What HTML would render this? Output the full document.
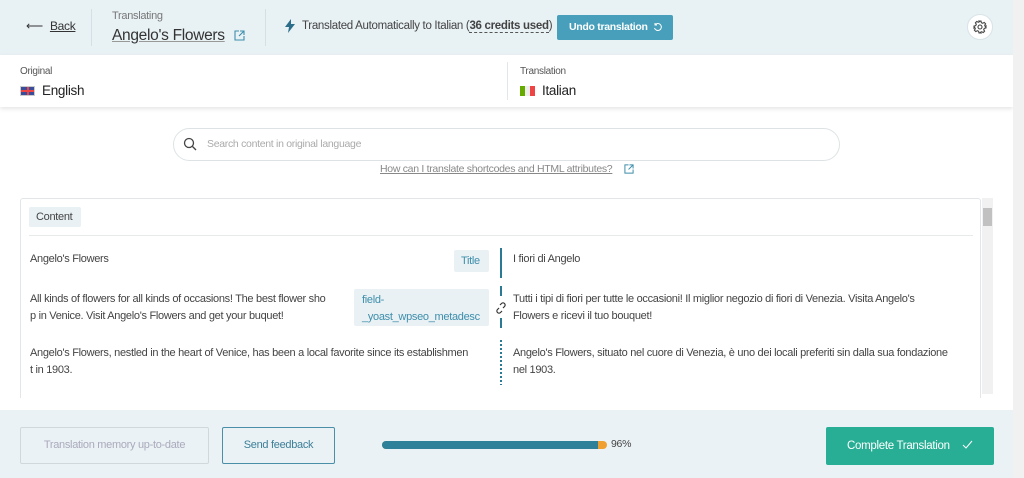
<!DOCTYPE html>
<html><head><meta charset="utf-8"><style>
*{box-sizing:border-box;margin:0;padding:0}
body{width:1024px;height:478px;overflow:hidden;background:#fff;font-family:"Liberation Sans",sans-serif;color:#333;position:relative;letter-spacing:-0.3px}
.a{position:absolute;white-space:nowrap}
.t{font-size:11px;color:#444}
</style></head><body>
<div class="a" style="left:0;top:0;width:1013px;height:55px;background:#e8f1f4"></div>
<div class="a" style="left:26px;top:19px;font-size:12px;color:#333">⟵ <span style="text-decoration:underline;margin-left:4px">Back</span></div>
<div class="a" style="left:91px;top:9px;width:1px;height:37px;background:#d5e0e4"></div>
<div class="a" style="left:112px;top:10px;font-size:11px;color:#777">Translating</div>
<div class="a" style="left:112px;top:27px;font-size:15.5px;color:#333;text-decoration:underline;text-decoration-color:#999">Angelo's Flowers</div>
<svg class="a" style="left:234px;top:30px" width="11" height="11" viewBox="0 0 11 11" fill="none" stroke="#3d8eab" stroke-width="1.1"><path d="M5 1H1v9h9V6M6 1h4v4M10 1L5 6"/></svg>
<div class="a" style="left:265px;top:9px;width:1px;height:37px;background:#d5e0e4"></div>
<svg class="a" style="left:285px;top:19px" width="10" height="14" viewBox="0 0 10 14"><path d="M6 0L0 8h4l-1 6 7-9H6z" fill="#2b6e8a"/></svg>
<div class="a" style="left:302px;top:20px;font-size:11.5px;color:#444">Translated Automatically to Italian (<b style="font-weight:bold;border-bottom:1px dashed #555">36 credits used</b>)</div>
<div class="a" style="left:557px;top:15px;width:116px;height:25px;background:#479fbb;border-radius:2px;color:#fff;font-size:10.5px;font-weight:bold;padding:6px 0 0 12px">Undo translation</div>
<svg class="a" style="left:653px;top:22px" width="10" height="10" viewBox="0 0 10 10" fill="none" stroke="#fff" stroke-width="1"><path d="M2 3A3.5 3.5 0 1 1 1.5 6M2 1v2h2"/></svg>
<div class="a" style="left:967px;top:14px;width:26px;height:26px;border-radius:50%;background:#fff;border:1px solid #d8e4e8"></div>
<svg class="a" style="left:973px;top:20px" width="14" height="14" viewBox="0 0 14 14" fill="none" stroke="#444" stroke-width="1.1"><circle cx="7" cy="7" r="2"/><path d="M6 1h2l.4 1.7 1.3.6 1.5-.9 1.4 1.4-.9 1.5.6 1.3L13 6v2l-1.7.4-.6 1.3.9 1.5-1.4 1.4-1.5-.9-1.3.6L8 13H6l-.4-1.7-1.3-.6-1.5.9-1.4-1.4.9-1.5-.6-1.3L1 8V6l1.7-.4.6-1.3-.9-1.5 1.4-1.4 1.5.9 1.3-.6z"/></svg>
<div class="a" style="left:0;top:55px;width:1013px;height:52px;background:#fff;box-shadow:0 2px 4px rgba(0,0,0,.1)"></div>
<div class="a" style="left:20px;top:66px;font-size:10px;color:#555">Original</div>
<div class="a" style="left:20px;top:86px;width:15px;height:10px;background:#3a4d9a;border:1px solid #ccc"><div style="position:absolute;left:6px;top:0;width:2px;height:8px;background:#e44"></div><div style="position:absolute;left:0;top:3px;width:13px;height:2px;background:#e44"></div></div>
<div class="a" style="left:42px;top:83px;font-size:13.5px;color:#222">English</div>
<div class="a" style="left:507px;top:62px;width:1px;height:38px;background:#e2e8ea"></div>
<div class="a" style="left:520px;top:66px;font-size:10px;color:#555">Translation</div>
<div class="a" style="left:520px;top:86px;width:15px;height:10px;background:linear-gradient(90deg,#6a0 33%,#eee 33% 66%,#e44 66%)"></div>
<div class="a" style="left:542px;top:83px;font-size:13.5px;color:#222">Italian</div>
<div class="a" style="left:173px;top:128px;width:667px;height:33px;border:1px solid #dde3e5;border-radius:17px"></div>
<svg class="a" style="left:183px;top:137px" width="14" height="14" viewBox="0 0 14 14" fill="none" stroke="#444" stroke-width="1.3"><circle cx="6" cy="6" r="4.5"/><path d="M9.5 9.5L13 13"/></svg>
<div class="a" style="left:207px;top:138px;font-size:10.5px;color:#aaa">Search content in original language</div>
<div class="a" style="left:380px;top:163px;font-size:10.5px;color:#888;text-decoration:underline">How can I translate shortcodes and HTML attributes?</div>
<svg class="a" style="left:624px;top:164px" width="10" height="10" viewBox="0 0 11 11" fill="none" stroke="#3d8eab" stroke-width="1.1"><path d="M5 1H1v9h9V6M6 1h4v4M10 1L5 6"/></svg>
<div class="a" style="left:20px;top:198px;width:961px;height:200px;border:1px solid #e2e6e8;border-bottom:none;border-radius:3px 3px 0 0"></div>
<div class="a" style="left:982px;top:198px;width:11px;height:196px;background:#f1f1f1"></div>
<div class="a" style="left:983px;top:208px;width:9px;height:18px;background:#c1c1c1"></div>
<div class="a" style="left:29px;top:207px;width:52px;height:20px;background:#e9f1f4;border-radius:2px;font-size:11px;color:#444;padding:4px 0 0 7px">Content</div>
<div class="a" style="left:29px;top:235px;width:944px;height:1px;background:#e6eaeb"></div>
<div class="a t" style="left:30px;top:253px">Angelo's Flowers</div>
<div class="a" style="left:454px;top:250px;width:35px;height:22px;background:#e9f1f4;border-radius:2px;color:#3d8eab;font-size:11px;padding:5px 0 0 7px">Title</div>
<div class="a" style="left:500px;top:248px;width:2px;height:30px;background:#2b7a95"></div>
<div class="a t" style="left:513px;top:253px">I fiori di Angelo</div>
<div class="a t" style="left:30px;top:291px;line-height:17px">All kinds of flowers for all kinds of occasions! The best flower sho<br>p in Venice. Visit Angelo's Flowers and get your buquet!</div>
<div class="a" style="left:354px;top:289px;width:135px;height:37px;background:#e9f1f4;border-radius:2px;color:#3d8eab;font-size:11px;padding:3px 0 0 8px;line-height:17px">field-<br>_yoast_wpseo_metadesc</div>
<div class="a" style="left:500px;top:286px;width:2px;height:10px;background:#2b7a95"></div>
<div class="a" style="left:500px;top:318px;width:2px;height:10px;background:#2b7a95"></div>
<svg class="a" style="left:494px;top:301px" width="14" height="14" viewBox="0 0 14 14" fill="none" stroke="#333" stroke-width="1.2"><path d="M6 4l1.5-1.5a2.1 2.1 0 0 1 3 3L9 7M8 10l-1.5 1.5a2.1 2.1 0 0 1-3-3L5 7"/></svg>
<div class="a t" style="left:513px;top:291px;line-height:17px">Tutti i tipi di fiori per tutte le occasioni! Il miglior negozio di fiori di Venezia. Visita Angelo's<br>Flowers e ricevi il tuo bouquet!</div>
<div class="a t" style="left:30px;top:345px;line-height:17px">Angelo's Flowers, nestled in the heart of Venice, has been a local favorite since its establishmen<br>t in 1903.</div>
<div class="a" style="left:500px;top:340px;width:2px;height:45px;background:repeating-linear-gradient(#2b7a95 0 2px,transparent 2px 4px)"></div>
<div class="a t" style="left:513px;top:345px;line-height:17px">Angelo's Flowers, situato nel cuore di Venezia, è uno dei locali preferiti sin dalla sua fondazione<br>nel 1903.</div>
<div class="a" style="left:0;top:410px;width:1013px;height:68px;background:#eaf2f5"></div>
<div class="a" style="left:20px;top:427px;width:189px;height:37px;border:1px solid #d0d8db;border-radius:2px;font-size:11px;color:#aab;text-align:center;line-height:35px">Translation memory up-to-date</div>
<div class="a" style="left:222px;top:427px;width:113px;height:37px;border:1px solid #4a8fa8;border-radius:2px;font-size:11px;color:#3d7f98;text-align:center;line-height:35px">Send feedback</div>
<div class="a" style="left:382px;top:441px;width:225px;height:8px;border-radius:4px;background:#f0a030"></div>
<div class="a" style="left:382px;top:441px;width:216px;height:8px;border-radius:4px 0 0 4px;background:#2f8099"></div>
<div class="a" style="left:611px;top:438px;font-size:10.5px;color:#444">96%</div>
<div class="a" style="left:826px;top:427px;width:168px;height:38px;background:#27ae94;border-radius:2px;color:#fff;font-size:11.5px;padding:13px 0 0 21px">Complete Translation</div>
<svg class="a" style="left:962px;top:440px" width="11" height="9" viewBox="0 0 11 9" fill="none" stroke="#fff" stroke-width="1"><path d="M1 5l3 3 6-7"/></svg>
<div class="a" style="left:1013px;top:0;width:11px;height:478px;background:#f1f1f1"></div>
</body></html>
